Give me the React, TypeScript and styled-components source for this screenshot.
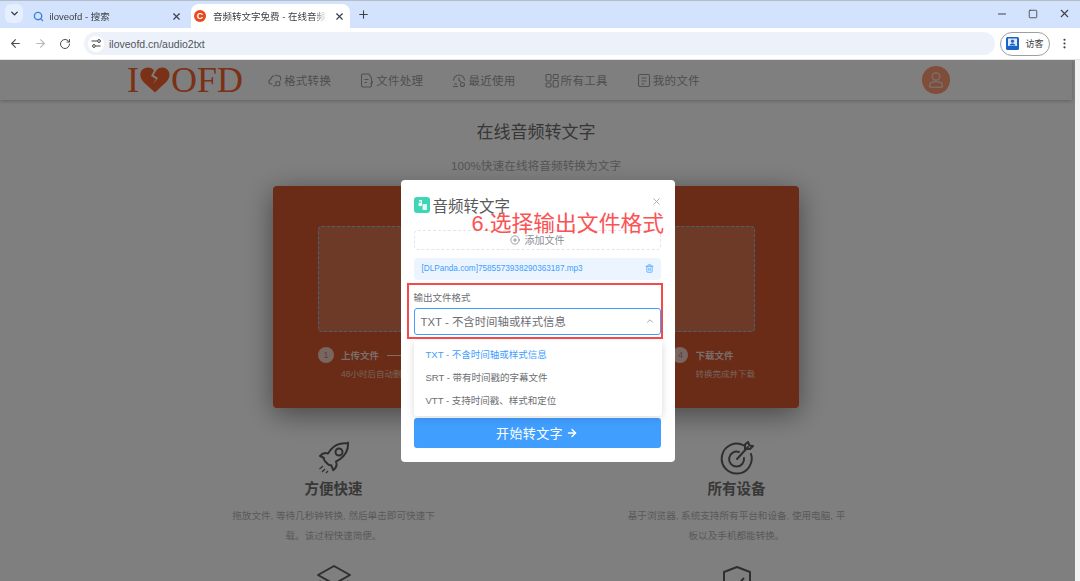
import React from "react";
import styled, { createGlobalStyle } from "styled-components";
import {
  ArrowLeft,
  ArrowRight,
  ChevronDown,
  ChevronUp,
  CirclePlus,
  EllipsisVertical,
  Minus,
  Plus,
  RotateCw,
  Search,
  Square,
  Trash2,
  X,
} from "lucide-react";

const FONT = `"Liberation Sans", "Noto Sans CJK SC", sans-serif`;

const GlobalStyle = createGlobalStyle`
  html, body {
    margin: 0;
    padding: 0;
    background: #fff;
    overflow: hidden;
  }
  * {
    box-sizing: border-box;
  }
`;

const Screen = styled.div`
  width: 1080px;
  height: 581px;
  display: flex;
  flex-direction: column;
  overflow: hidden;
  font-family: ${FONT};
`;

/* browser chrome */
const TabStrip = styled.div`
  height: 28px;
  flex-shrink: 0;
  display: flex;
  align-items: flex-end;
  padding-left: 5px;
  background: #d3e3fd;
  border-top: 1px solid #b4bcc4;
`;

const TabMenu = styled.div`
  width: 18px;
  height: 19px;
  margin-bottom: 5px;
  display: flex;
  align-items: center;
  justify-content: center;
  border-radius: 6px;
  background: #e6effd;
  color: #2c3440;
`;

const Tab = styled.div<{ $active?: boolean }>`
  width: ${(p) => (p.$active ? "159px" : "154px")};
  height: 24px;
  margin-left: ${(p) => (p.$active ? "8px" : "6px")};
  padding: ${(p) => (p.$active ? "0 5px 0 3px" : "0 1.5px 0 3.5px")};
  display: flex;
  align-items: center;
  gap: ${(p) => (p.$active ? "7px" : "6px")};
  border-radius: 8px 8px 0 0;
  background: ${(p) => (p.$active ? "#fff" : "transparent")};
  color: #3c4043;
  font-size: 9.5px;
`;

const TabTitle = styled.span`
  flex: 1;
  min-width: 0;
  white-space: nowrap;
  overflow: hidden;
  mask-image: linear-gradient(to right, #000 88%, transparent);
`;

const Favicon = styled.span`
  width: 12px;
  height: 12px;
  display: flex;
  align-items: center;
  justify-content: center;
  flex-shrink: 0;
  border-radius: 50%;
  background: #e8491f;
  color: #fff;
  font-size: 9px;
  font-weight: 700;
`;

const NewTab = styled.div`
  margin: 0 0 7px 7px;
  color: #3c4043;
  display: flex;
`;

const WindowControls = styled.div`
  margin-left: auto;
  margin-bottom: 8px;
  display: flex;
  align-items: center;
  gap: 20px;
  padding-right: 9px;
  color: #3c4043;
`;

const Toolbar = styled.div`
  height: 31px;
  flex-shrink: 0;
  display: flex;
  align-items: center;
  padding-left: 9px;
  background: #fff;
  color: #4a4d51;
`;

const NavButtons = styled.div`
  display: flex;
  align-items: center;
  gap: 12px;
`;

const Omnibox = styled.div`
  width: 911px;
  height: 23px;
  margin-left: 13px;
  padding-left: 4px;
  display: flex;
  align-items: center;
  gap: 5px;
  border-radius: 12px;
  background: #edf2fa;
  color: #50545a;
  font-size: 10.5px;
`;

const SiteInfo = styled.span`
  width: 16px;
  height: 16px;
  display: flex;
  align-items: center;
  justify-content: center;
  border-radius: 50%;
  background: #fff;
`;

const ProfilePill = styled.div`
  width: 50px;
  height: 24px;
  margin-left: 5px;
  display: flex;
  align-items: center;
  justify-content: center;
  gap: 6px;
  border: 1px solid #9aa0a6;
  border-radius: 12px;
  font-size: 9px;
  color: #3c4043;
`;

const MenuDots = styled.div`
  margin-left: 8px;
  display: flex;
  color: #3c4043;
`;

/* page */
const Page = styled.div`
  position: relative;
  flex: 1;
  min-height: 0;
  display: flex;
  border-top: 1px solid #e4e4e4;
  overflow: hidden;
  background: #fff;
`;

const Main = styled.div`
  flex: 1;
  min-width: 0;
  padding-right: 3px;
`;

const ScrollTrack = styled.div`
  width: 5px;
  background: #f2f2f2;
`;

const SiteHeader = styled.header`
  height: 40px;
  display: flex;
  align-items: center;
  padding-left: 127px;
  background: #fff;
  box-shadow: 0 1px 4px rgba(0, 0, 0, 0.25);
`;

const Logo = styled.div`
  width: 141px;
  display: flex;
  align-items: center;
  font-family: "Liberation Serif", serif;
  font-size: 36px;
  line-height: 40px;
  color: #f4622f;
`;

const SiteNav = styled.nav`
  display: flex;
  gap: 29px;
`;

const SiteNavItem = styled.div`
  display: flex;
  align-items: center;
  gap: 2px;
  color: #9e9e9e;
  font-size: 11.5px;
  letter-spacing: 0.3px;
  white-space: nowrap;
`;

const Avatar = styled.div`
  width: 28px;
  height: 28px;
  margin-left: 222px;
  display: flex;
  align-items: center;
  justify-content: center;
  border-radius: 50%;
  background: #ff9a72;
`;

const Heading = styled.h1`
  margin: 21px 0 0;
  text-align: center;
  font-size: 17px;
  line-height: 24px;
  font-weight: 400;
  color: #6e6e6e;
`;

const SubHeading = styled.p`
  margin: 13px 0 0;
  text-align: center;
  font-size: 11.7px;
  line-height: 16px;
  color: #a8a8a8;
`;

const UploadPanel = styled.section`
  width: 526px;
  height: 222px;
  margin: 12px auto 0;
  padding: 40px 44px 0 45px;
  border-radius: 4px;
  background: #d4572e;
  box-shadow: 0 6px 28px rgba(0, 0, 0, 0.45);
`;

const DropZone = styled.div`
  height: 106px;
  border: 1px dashed #8ec4f2;
  border-radius: 4px;
  background: #dd7550;
`;

const Steps = styled.div`
  display: flex;
  margin-top: 15px;
`;

const Step = styled.div<{ $last?: boolean }>`
  flex: ${(p) => (p.$last ? "0 0 81px" : "1")};
  display: grid;
  grid-template-columns: 16px 1fr;
  grid-auto-rows: min-content;
  column-gap: 7px;
  row-gap: 5px;
  align-items: center;
`;

const StepNumber = styled.span`
  width: 16px;
  height: 16px;
  display: flex;
  align-items: center;
  justify-content: center;
  border-radius: 50%;
  background: #fff;
  opacity: 0.7;
  color: #999;
  font-size: 9px;
`;

const StepTitle = styled.span`
  display: flex;
  align-items: center;
  gap: 8px;
  color: #f3ddd4;
  font-size: 9.5px;
  font-weight: 700;
  white-space: nowrap;
`;

const StepLine = styled.i`
  flex: 1;
  height: 1px;
  background: #f3ddd4;
`;

const StepNote = styled.span`
  grid-column: 2;
  color: #f0c6b5;
  font-size: 8.5px;
  line-height: 12px;
  white-space: nowrap;
`;

const Features = styled.div`
  display: grid;
  grid-template-columns: 206px 206px;
  justify-content: center;
  column-gap: 197px;
  row-gap: 19px;
  margin-top: 33px;
  padding-right: 2px;
`;

const Feature = styled.div`
  text-align: center;
`;

const FeatureIcon = styled.div`
  height: 34px;
  display: flex;
  justify-content: center;
  color: #5e5e5e;
`;

const FeatureTitle = styled.h3`
  margin: 3px 0 0;
  font-size: 14.5px;
  line-height: 22px;
  font-weight: 700;
  color: #707070;
`;

const FeatureText = styled.p`
  margin: 6px -14px 0;
  font-size: 9.6px;
  line-height: 20px;
  white-space: pre-line;
  color: #b4b4b4;
`;

/* modal */
const Backdrop = styled.div`
  position: absolute;
  inset: 0 5px 0 0;
  display: flex;
  align-items: center;
  justify-content: center;
  background: rgba(0, 0, 0, 0.5);
`;

const Modal = styled.div`
  position: relative;
  width: 274px;
  height: 282px;
  padding: 15px 14px 14px 13px;
  border-radius: 4px;
  background: #fff;
`;

const ModalHead = styled.div`
  height: 20px;
  display: flex;
  align-items: center;
  gap: 3px;
  color: #5a5a5a;
  font-size: 15.5px;
`;

const ModalClose = styled.span`
  margin: 0 -1px 7px auto;
  display: flex;
  color: #a8abb2;
`;

const AddFile = styled.div`
  height: 20px;
  margin-top: 15px;
  display: flex;
  align-items: center;
  justify-content: center;
  gap: 5px;
  border: 1px dashed #e3e5e9;
  border-radius: 4px;
  color: #8a8d93;
  font-size: 10px;
`;

const FileRow = styled.div`
  height: 22px;
  margin-top: 8px;
  padding: 0 7px 0 8px;
  display: flex;
  align-items: center;
  justify-content: space-between;
  border-radius: 4px;
  background: #ecf5ff;
  color: #409eff;
  font-size: 8.2px;
`;

const FieldLabel = styled.div`
  margin-top: 12px;
  color: #6c6e72;
  font-size: 9.5px;
  line-height: 12px;
`;

const SelectBox = styled.div`
  height: 27px;
  margin-top: 4px;
  padding: 0 5px 0 6px;
  display: flex;
  align-items: center;
  justify-content: space-between;
  border: 1px solid #409eff;
  border-radius: 3px;
  color: #6b6e73;
  font-size: 11.4px;
`;

const Dropdown = styled.ul`
  position: absolute;
  left: 13px;
  top: 160px;
  width: 248px;
  height: 76px;
  margin: 0;
  padding: 3px 0;
  list-style: none;
  border-radius: 3px;
  background: #fff;
  box-shadow: 0 2px 8px rgba(0, 0, 0, 0.15);
`;

const DropdownItem = styled.li<{ $selected?: boolean }>`
  height: 23px;
  padding-left: 12px;
  display: flex;
  align-items: center;
  color: ${(p) => (p.$selected ? "#409eff" : "#6b6e73")};
  font-size: 9.5px;
`;

const StartButton = styled.button`
  width: 100%;
  height: 30px;
  margin-top: 83px;
  display: flex;
  align-items: center;
  justify-content: center;
  gap: 3px;
  border: 0;
  border-radius: 3px;
  background: #409eff;
  color: #fff;
  font-family: ${FONT};
  font-size: 13px;
  letter-spacing: 0.4px;
`;

/* red marks drawn on top of the screenshot */
const Callout = styled.div`
  position: absolute;
  left: 71px;
  top: 30px;
  color: #fb5253;
  font-size: 21.8px;
  line-height: 27px;
  white-space: nowrap;
`;

const CalloutBox = styled.div`
  position: absolute;
  left: 6px;
  top: 103px;
  width: 256px;
  height: 56px;
  border: 2px solid #f4494b;
  pointer-events: none;
`;

const BrokenHeart = () => (
  <svg width="30" height="26" viewBox="0 0 30 26" style={{ margin: "0 1px" }}>
    <path
      d="M15 25.500 4 15.500C-1.500 10-.5 3 4.500 1.200 8.500-.2 12 1 14 3.500L11 9l5 3-3 5 5-6-4.500-3 3.500-5.500C19 .8 23 -.4 26 1.400c4.500 2.600 4.800 9 .2 13.600L15 25.500Z"
      fill="currentColor"
    />
  </svg>
);

const ConvertIcon = () => (
  <svg width="14" height="15" viewBox="0 0 16 16" fill="none" stroke="currentColor" strokeWidth="1.200">
    <path d="M9 2.500h2.500a3 3 0 0 1 3 3V8M10 2.500 8 1.500M3 7c-1.500 0-2 1.200-2 2.500S2 12 3.500 12H5" />
    <rect x="9" y="9.500" width="4.500" height="4.500" rx="1" />
    <path d="M3 7c.3-2.500 2-4 4-4.500" />
    <path d="M6 14.500c1 0 1.500-.5 1.500-1.500" />
  </svg>
);

const FileIcon = () => (
  <svg width="14" height="15" viewBox="0 0 14 15" fill="none" stroke="currentColor" strokeWidth="1.100">
    <path d="M9 1H3a1.500 1.500 0 0 0-1.500 1.500v10A1.500 1.500 0 0 0 3 14h7a1.500 1.500 0 0 0 1.500-1.500V5L9 1Z" />
    <path d="M4.500 6.500h4M4.500 9.500h2.500M13 8.500l-2.500 2.500" />
  </svg>
);

const RecentIcon = () => (
  <svg width="14" height="15" viewBox="0 0 14 15" fill="none" stroke="currentColor" strokeWidth="1.100">
    <path d="M1.500 7.500a5.500 5.500 0 0 1 11 0M2 11h3M1 13.500h5" />
    <path d="M7 4.500v3l2 1.500" />
    <circle cx="10.500" cy="11.500" r="2" />
  </svg>
);

const GridIcon = () => (
  <svg width="14" height="15" viewBox="0 0 14 15" fill="none" stroke="currentColor" strokeWidth="1.100">
    <rect x="1" y="1.500" width="5" height="6.500" rx="1" />
    <rect x="8.200" y="1.500" width="5" height="4" rx="1" />
    <rect x="1" y="10" width="5" height="4" rx="1" />
    <rect x="8.200" y="7.500" width="5" height="6.500" rx="1" />
  </svg>
);

const FolderIcon = () => (
  <svg width="14" height="15" viewBox="0 0 14 15" fill="none" stroke="currentColor" strokeWidth="1.100">
    <rect x="1.500" y="1.500" width="11" height="12" rx="1.500" />
    <path d="M4.500 5h5M4.500 8h5M4.500 11h3" />
  </svg>
);

const UserIcon = () => (
  <svg width="20" height="20" viewBox="0 0 20 20" fill="none" stroke="#f4d8cc" strokeWidth="1.500">
    <circle cx="10" cy="6.500" r="3.700" />
    <path d="M3.500 15.500c0-2.500 2.500-3.700 6.500-3.700s6.500 1.200 6.500 3.700c0 1.200-.8 1.800-2 1.800h-9c-1.200 0-2-.6-2-1.800Z" />
  </svg>
);

const GuestIcon = () => (
  <svg width="13" height="13" viewBox="0 0 13 13">
    <rect width="13" height="13" rx="1.500" fill="#1a63c9" />
    <rect x="2" y="1.500" width="9" height="7.500" fill="#dfeafb" />
    <circle cx="6.500" cy="4.200" r="1.600" fill="#1a63c9" />
    <path d="M3.500 8.500c.4-1.500 1.600-2 3-2s2.600.5 3 2Z" fill="#1a63c9" />
  </svg>
);

const SiteInfoIcon = () => (
  <svg width="11" height="11" viewBox="0 0 11 11" fill="none" stroke="#3c4043" strokeWidth="1">
    <path d="M0.500 3h5.500M9.500 8H5" />
    <circle cx="8" cy="3" r="1.400" />
    <circle cx="3" cy="8" r="1.400" />
  </svg>
);

const AudioIcon = () => (
  <svg width="16" height="16" viewBox="0 0 16 16">
    <rect width="16" height="16" rx="3" fill="#3fd6b8" />
    <path d="M5 3h3v4.500a1.800 1.800 0 1 1-1-1.600V4.500H5Z" fill="#fff" />
    <rect x="8.500" y="7" width="4.500" height="6" rx="0.800" fill="#fff" opacity="0.850" />
  </svg>
);

const RocketIcon = () => (
  <svg width="34" height="34" viewBox="0 0 34 34" fill="none" stroke="currentColor" strokeWidth="2" strokeLinejoin="round">
    <path d="M31 2.500c-6-.8-13 1-17.500 6.500L11 12.500c-3-1-6 .2-8 2.500l4 2c-.3 1.200.2 2.300 1 3.200l3 3c.9.8 2 1.200 3.200 1l2 5c2.800-2 4-5.500 2.800-8.500l4-2.500c6-4.500 8.500-11 8-16.700Z" />
    <circle cx="22" cy="11" r="3.500" />
    <path d="M2.500 28 6 25M5 31l3-3M9 32l2-2" strokeWidth="1.200" />
  </svg>
);

const TargetIcon = () => (
  <svg width="34" height="34" viewBox="0 0 34 34" fill="none" stroke="currentColor" strokeWidth="2" strokeLinecap="round">
    <path d="M24 4.500A15 15 0 1 0 31 13" />
    <path d="M19 11a7.500 7.500 0 1 0 5 6" />
    <path d="M17 18 28 6" />
    <path d="M25 8V3.500L28 1l1.500 3.500L33 5l-3 3Z" strokeLinejoin="round" />
  </svg>
);

const LayersIcon = () => (
  <svg width="34" height="34" viewBox="0 0 34 34" fill="none" stroke="currentColor" strokeWidth="2" strokeLinejoin="round">
    <path d="M17 1 33 10 17 19 1 10Z" />
    <path d="M4 16 1 18l16 9 16-9-3-2" />
  </svg>
);

const ShieldIcon = () => (
  <svg width="34" height="34" viewBox="0 0 34 34" fill="none" stroke="currentColor" strokeWidth="2" strokeLinejoin="round">
    <path d="M17 2 30 7v11c0 7-6 11-13 14C10 29 4 25 4 18V7Z" />
    <path d="m11 17 5 5 8-9" />
  </svg>
);

const siteNav = [
  { icon: <ConvertIcon />, label: "格式转换" },
  { icon: <FileIcon />, label: "文件处理" },
  { icon: <RecentIcon />, label: "最近使用" },
  { icon: <GridIcon />, label: "所有工具" },
  { icon: <FolderIcon />, label: "我的文件" },
];

// steps two and three sit behind the modal, so only their cells are kept
const steps = [
  { title: "上传文件", note: "48小时后自动删除文件" },
  null,
  null,
  { title: "下载文件", note: "转换完成并下载" },
];

const features = [
  {
    icon: <RocketIcon />,
    title: "方便快速",
    text: "拖放文件, 等待几秒钟转换, 然后单击即可快速下\n载。该过程快速简便。",
  },
  {
    icon: <TargetIcon />,
    title: "所有设备",
    text: "基于浏览器, 系统支持所有平台和设备, 使用电脑, 平\n板以及手机都能转换。",
  },
  { icon: <LayersIcon /> },
  { icon: <ShieldIcon /> },
];

const formats = [
  "TXT - 不含时间轴或样式信息",
  "SRT - 带有时间戳的字幕文件",
  "VTT - 支持时间戳、样式和定位",
];

const App = () => {
  return (
    <Screen>
      <GlobalStyle />
      <TabStrip>
        <TabMenu>
          <ChevronDown size={11} strokeWidth={3} />
        </TabMenu>
        <Tab>
          <Search size={11} color="#3b82d6" strokeWidth={3} />
          <TabTitle>iloveofd - 搜索</TabTitle>
          <X size={11} strokeWidth={2.500} />
        </Tab>
        <Tab $active>
          <Favicon>C</Favicon>
          <TabTitle>音频转文字免费 - 在线音频语音</TabTitle>
          <X size={11} strokeWidth={2.500} />
        </Tab>
        <NewTab>
          <Plus size={13} strokeWidth={2} />
        </NewTab>
        <WindowControls>
          <Minus size={12} />
          <Square size={10} />
          <X size={13} />
        </WindowControls>
      </TabStrip>
      <Toolbar>
        <NavButtons>
          <ArrowLeft size={13} />
          <ArrowRight size={13} color="#b6b8bb" />
          <RotateCw size={12} />
        </NavButtons>
        <Omnibox>
          <SiteInfo>
            <SiteInfoIcon />
          </SiteInfo>
          iloveofd.cn/audio2txt
        </Omnibox>
        <ProfilePill>
          <GuestIcon />
          访客
        </ProfilePill>
        <MenuDots>
          <EllipsisVertical size={13} />
        </MenuDots>
      </Toolbar>
      <Page>
        <Main>
          <SiteHeader>
            <Logo>
              I<BrokenHeart />
              OFD
            </Logo>
            <SiteNav>
              {siteNav.map((item) => (
                <SiteNavItem key={item.label}>
                  {item.icon}
                  {item.label}
                </SiteNavItem>
              ))}
            </SiteNav>
            <Avatar>
              <UserIcon />
            </Avatar>
          </SiteHeader>
          <Heading>在线音频转文字</Heading>
          <SubHeading>100%快速在线将音频转换为文字</SubHeading>
          <UploadPanel>
            <DropZone />
            <Steps>
              {steps.map((step, index) => (
                <Step key={index} $last={index === steps.length - 1}>
                  {step && (
                    <>
                      <StepNumber>{index + 1}</StepNumber>
                      <StepTitle>
                        {step.title}
                        {index < steps.length - 1 && <StepLine />}
                      </StepTitle>
                      <StepNote>{step.note}</StepNote>
                    </>
                  )}
                </Step>
              ))}
            </Steps>
          </UploadPanel>
          <Features>
            {features.map((feature, index) => (
              <Feature key={index}>
                <FeatureIcon>{feature.icon}</FeatureIcon>
                {feature.title && <FeatureTitle>{feature.title}</FeatureTitle>}
                {feature.text && <FeatureText>{feature.text}</FeatureText>}
              </Feature>
            ))}
          </Features>
        </Main>
        <ScrollTrack />
        <Backdrop>
          <Modal>
            <ModalHead>
              <AudioIcon />
              音频转文字
              <ModalClose>
                <X size={11} />
              </ModalClose>
            </ModalHead>
            <AddFile>
              <CirclePlus size={10} />
              添加文件
            </AddFile>
            <FileRow>
              [DLPanda.com]7585573938290363187.mp3
              <Trash2 size={9} />
            </FileRow>
            <FieldLabel>输出文件格式</FieldLabel>
            <SelectBox>
              {formats[0]}
              <ChevronUp size={10} color="#909399" />
            </SelectBox>
            <StartButton>
              开始转文字
              <ArrowRight size={12} strokeWidth={3} />
            </StartButton>
            <Dropdown>
              {formats.map((format, index) => (
                <DropdownItem key={format} $selected={index === 0}>
                  {format}
                </DropdownItem>
              ))}
            </Dropdown>
            <Callout>6.选择输出文件格式</Callout>
            <CalloutBox />
          </Modal>
        </Backdrop>
      </Page>
    </Screen>
  );
};

export default App;
